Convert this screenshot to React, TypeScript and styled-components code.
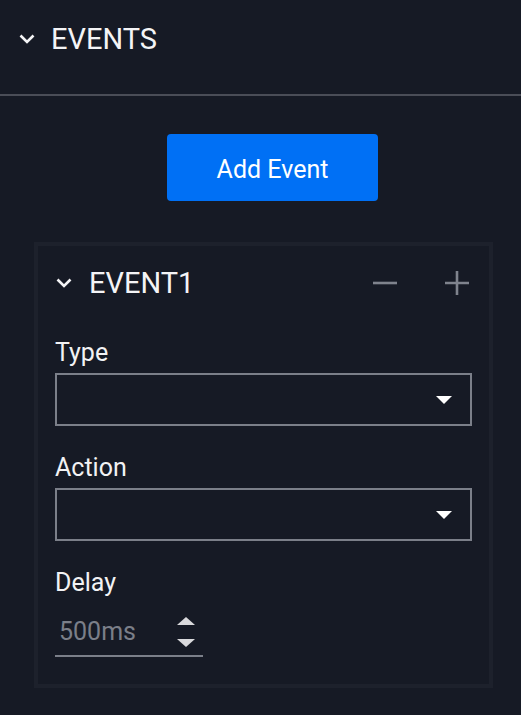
import React from "react";
import styled, { createGlobalStyle } from "styled-components";

const GlobalStyle = createGlobalStyle`
  html, body {
    margin: 0;
    padding: 0;
    background: #161a25;
  }
  body {
    font-family: Roboto, "Liberation Sans", sans-serif;
    color: #f2f2f4;
  }
  * { box-sizing: border-box; }
`;

const Page = styled.div`
  width: 521px;
  min-height: 715px;
  background: #161a25;
`;

const SectionHeader = styled.div`
  height: 94px;
  display: flex;
  align-items: flex-start;
  padding: 22px 0 0 19px;
`;

const Title = styled.div`
  font-size: 29px;
  line-height: 34px;
  font-weight: 400;
  color: #f4f4f6;
  display: flex;
  align-items: center;
  gap: 16px;
`;

const Divider = styled.div`
  height: 2px;
  background: #4a4d57;
`;

const ButtonRow = styled.div`
  display: flex;
  justify-content: center;
  padding: 38px 0 41px 24px;
`;

const AddButton = styled.button`
  width: 211px;
  height: 67px;
  border: none;
  border-radius: 4px;
  padding-top: 5px;
  background: #0070f5;
  color: #ffffff;
  font-family: Roboto, "Liberation Sans", sans-serif;
  font-size: 25px;
  cursor: pointer;
`;

const Card = styled.div`
  margin: 0 28px 0 34px;
  border: 4px solid #1d212c;
  padding: 20px 17px 27px 17px;
`;

const CardHeader = styled.div`
  display: flex;
  align-items: center;
  justify-content: space-between;
  height: 34px;
  margin-bottom: 38px;
`;

const CardTitle = styled(Title)`
  gap: 17px;
  padding-left: 1px;
`;

const Controls = styled.div`
  display: flex;
  align-items: center;
  gap: 48px;
  padding-right: 3px;
`;

const IconButton = styled.span`
  display: flex;
  width: 24px;
  height: 24px;
  color: #7f838d;
`;

const Field = styled.div<{ $last?: boolean }>`
  display: flex;
  flex-direction: column;
  margin-bottom: ${(p) => (p.$last ? "0" : "27px")};
`;

const Label = styled.label<{ $gap: number }>`
  font-size: 25px;
  line-height: 29px;
  color: #f2f2f4;
  margin-bottom: ${(p) => p.$gap}px;
`;

const Select = styled.div`
  height: 53px;
  border: 2px solid #7b7f89;
  display: flex;
  align-items: center;
  justify-content: flex-end;
  padding-right: 18px;
`;

const Caret = styled.span`
  width: 0;
  height: 0;
  border-left: 8px solid transparent;
  border-right: 8px solid transparent;
  border-top: 8px solid #ffffff;
`;

const NumberBox = styled.div`
  width: 148px;
  height: 50px;
  border-bottom: 2px solid #7b7f89;
  display: flex;
  align-items: center;
  justify-content: space-between;
  padding: 0 8px 0 4px;
`;

const Value = styled.span`
  font-size: 25px;
  line-height: 29px;
  color: #7b7f89;
`;

const Spinner = styled.div`
  display: flex;
  flex-direction: column;
  gap: 14px;
  padding-top: 2px;
`;

const Arrow = styled.span<{ $up?: boolean }>`
  width: 0;
  height: 0;
  border-left: 9px solid transparent;
  border-right: 9px solid transparent;
  ${(p) =>
    p.$up ? "border-bottom: 8px solid #d9d9dc;" : "border-top: 8px solid #d9d9dc;"}
`;

const Chevron = () => (
  <svg width="16" height="10" viewBox="0 0 16 10">
    <path d="M1.5 1.5 L8 8 L14.5 1.5" fill="none" stroke="#f4f4f6" strokeWidth="2.6" />
  </svg>
);

const fields = [
  { label: "Type", kind: "select" },
  { label: "Action", kind: "select" },
  { label: "Delay", kind: "number" },
];

export default function App() {
  return (
    <>
      <GlobalStyle />
      <Page>
        <SectionHeader>
          <Title>
            <Chevron />
            EVENTS
          </Title>
        </SectionHeader>
        <Divider />
        <ButtonRow>
          <AddButton>Add Event</AddButton>
        </ButtonRow>
        <Card>
          <CardHeader>
            <CardTitle>
              <Chevron />
              EVENT1
            </CardTitle>
            <Controls>
              <IconButton>
                <svg width="24" height="24" viewBox="0 0 24 24">
                  <path d="M0 12 H24" stroke="currentColor" strokeWidth="2.6" />
                </svg>
              </IconButton>
              <IconButton>
                <svg width="24" height="24" viewBox="0 0 24 24">
                  <path d="M0 12 H24 M12 0 V24" stroke="currentColor" strokeWidth="2.6" />
                </svg>
              </IconButton>
            </Controls>
          </CardHeader>
          {fields.map((f, i) => (
            <Field key={f.label} $last={i === fields.length - 1}>
              <Label $gap={f.kind === "select" ? 6 : 10}>{f.label}</Label>
              {f.kind === "select" ? (
                <Select>
                  <Caret />
                </Select>
              ) : (
                <NumberBox>
                  <Value>500ms</Value>
                  <Spinner>
                    <Arrow $up />
                    <Arrow />
                  </Spinner>
                </NumberBox>
              )}
            </Field>
          ))}
        </Card>
      </Page>
    </>
  );
}
